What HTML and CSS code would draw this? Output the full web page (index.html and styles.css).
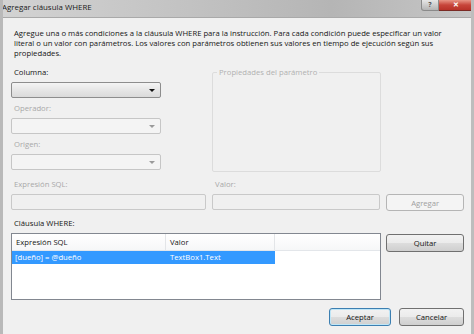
FILE: index.html
```html
<!DOCTYPE html>
<html lang="es">
<head>
  <meta charset="UTF-8" />
  <title>Agregar cláusula WHERE</title>
  <link rel="stylesheet" href="styles.css">
</head>
<body>

  <div class="window">
    <!-- Title bar -->
    <div class="titlebar">
      <span class="title">Agregar cláusula WHERE</span>
      <div class="caption-btns">
        <span class="help-btn">?</span>
        <span class="close-btn">&#x2715;</span>
      </div>
    </div>

    <div class="panel">
      <p class="intro">Agregue una o más condiciones a la cláusula WHERE para la instrucción. Para cada condición puede especificar un valor<br>literal o un valor con parámetros. Los valores con parámetros obtienen sus valores en tiempo de ejecución según sus<br>propiedades.</p>

      <div class="top">
        <div class="fields">
          <div class="lbl">Columna:</div>
          <div class="combo"><span class="arrow"></span></div>
          <div class="lbl disabled">Operador:</div>
          <div class="combo disabled"><span class="arrow"></span></div>
          <div class="lbl disabled">Origen:</div>
          <div class="combo disabled"><span class="arrow"></span></div>
        </div>
        <fieldset class="props">
          <legend>Propiedades del parámetro</legend>
        </fieldset>
      </div>

      <div class="expr-row">
        <div class="expr">
          <div class="lbl disabled">Expresión SQL:</div>
          <div class="textbox"></div>
        </div>
        <div class="valor">
          <div class="lbl disabled">Valor:</div>
          <div class="textbox"></div>
        </div>
        <button class="btn add-btn" disabled>Agregar</button>
      </div>

      <div class="lbl where-lbl">Cláusula WHERE:</div>
      <div class="where-row">
        <div class="list">
          <div class="list-head">
            <span class="col col-expr">Expresión SQL</span>
            <span class="col col-val">Valor</span>
            <span class="col col-rest"></span>
          </div>
          <div class="list-row selected">
            <span class="col col-expr">[dueño] = @dueño</span>
            <span class="col col-val">TextBox1.Text</span>
          </div>
        </div>
        <button class="btn quit-btn">Quitar</button>
      </div>

      <div class="footer">
        <button class="btn ok-btn">Aceptar</button>
        <button class="btn cancel-btn">Cancelar</button>
      </div>
    </div>
  </div>

</body>
</html>
```
FILE: styles.css
```css
body {
  margin: 0;
  font-family: 'Open Sans', 'Noto Sans', sans-serif;
  font-size: 7.7px;
  color: #151515;
  background: #f0f0f0;
}

.window {
  width: 474px;
  height: 334px;
  background: #c4c4c4;
  box-sizing: border-box;
  border-left: 3px solid #b9b9b9;
  border-right: 3px solid #bdbdbd;
  display: flex;
  flex-direction: column;
  overflow: hidden;
}

/* title bar */
.titlebar {
  height: 17px;
  margin-left: -3px;
  margin-right: -3px;
  background: linear-gradient(90deg, #d3d3d3, #c2c2c2 40%, #b5b5b5 70%, #c6c6c6);
  display: flex;
  justify-content: space-between;
  align-items: flex-start;
}

.title {
  padding-left: 2px;
  line-height: 15px;
  font-size: 7.9px;
  color: #1a1a1a;
}

.caption-btns {
  display: flex;
  height: 11px;
}

.help-btn {
  width: 16px;
  background: linear-gradient(#e6e6e6, #b4b4b4);
  border: 1px solid #8a8a8a;
  border-top: none;
  border-radius: 0 0 0 3px;
  color: #555;
  font-size: 7px;
  font-weight: bold;
  text-align: center;
  line-height: 10px;
}

.close-btn {
  width: 34px;
  background: linear-gradient(#e89585, #c7453a 50%, #b83228);
  border: 1px solid #7a2a24;
  border-top: none;
  border-left: none;
  color: #fff;
  font-size: 7px;
  font-weight: bold;
  text-align: center;
  line-height: 10px;
}

/* content */
.panel {
  flex: 1;
  background: #f0f0f0;
  border-top: 1px solid #a9a9a9;
  padding: 10px 7px 0 8px;
}

.intro {
  margin: 0;
  padding-left: 3px;
  line-height: 10px;
  white-space: nowrap;
}

.lbl {
  height: 20px;
  line-height: 20px;
  padding-left: 3px;
}

.disabled {
  color: #a8a8a8;
}

.top {
  display: flex;
  margin-top: 4px;
}

.fields {
  width: 201px;
}

.combo {
  width: 150px;
  height: 16px;
  box-sizing: border-box;
  border: 1px solid #8d8d8d;
  border-radius: 2px;
  background: linear-gradient(#f4f4f4, #e6e6e6 50%, #dadada);
  display: flex;
  justify-content: flex-end;
  align-items: center;
  padding-right: 5px;
}

.combo.disabled {
  border-color: #c6c6c6;
  background: #f4f4f4;
}

.arrow {
  width: 0;
  height: 0;
  border-left: 3px solid transparent;
  border-right: 3px solid transparent;
  border-top: 3px solid #111;
}

.combo.disabled .arrow {
  border-top-color: #9a9a9a;
}

.props {
  margin: 5px 0 0 0;
  padding: 0;
  width: 169px;
  height: 105px;
  box-sizing: border-box;
  border: 1px solid #dcdcdc;
  border-radius: 2px;
}

.props legend {
  margin-left: 4px;
  padding: 0 2px;
  line-height: 10px;
  color: #b0b0b0;
}

/* expression row */
.expr-row {
  display: flex;
  align-items: flex-end;
  margin-top: 2px;
}

.expr {
  width: 196px;
  margin-right: 6px;
}

.valor {
  width: 169px;
  margin-right: 6px;
}

.textbox {
  height: 16px;
  box-sizing: border-box;
  border: 1px solid #c9c9c9;
  border-radius: 2px;
  background: #f0f0f0;
}

.btn {
  font-family: inherit;
  font-size: 7.7px;
  color: #151515;
  box-sizing: border-box;
  border: 1px solid #707070;
  border-radius: 3px;
  background: linear-gradient(#f2f2f2, #ebebeb 50%, #dddddd 51%, #cfcfcf);
  padding: 0;
}

.add-btn {
  width: 78px;
  height: 17px;
  margin-bottom: -1px;
  color: #a0a0a0;
  border-color: #b5b5b5;
  background: #f4f4f4;
}

/* where clause */
.where-lbl {
  height: 19px;
  line-height: 19px;
  margin-top: 4px;
}

.where-row {
  display: flex;
  align-items: flex-start;
}

.list {
  width: 371px;
  height: 67px;
  box-sizing: border-box;
  border: 1px solid #828790;
  background: #fff;
}

.list-head {
  display: flex;
  height: 16px;
  border-bottom: 1px solid #e3e6ea;
  background: linear-gradient(#ffffff, #f6f7f8);
}

.list-head .col {
  line-height: 16px;
  border-right: 1px solid #e3e5e8;
}

.col {
  box-sizing: border-box;
  padding-left: 4px;
  white-space: nowrap;
}

.col-expr {
  width: 154px;
}

.col-val {
  width: 109px;
}

.col-rest {
  flex: 1;
  border-right: none !important;
}

.list-row {
  display: flex;
  height: 13px;
  line-height: 13px;
}

.list-row.selected {
  width: 263px;
  background: #3399ff;
  color: #fff;
}

.list-row .col-expr {
  padding-left: 3px;
}

.list-row .col-val {
  padding-left: 4px;
}

.quit-btn {
  width: 78px;
  height: 18px;
  margin-left: 5px;
  margin-top: 1px;
}

/* footer */
.footer {
  display: flex;
  justify-content: flex-end;
  gap: 8px;
  margin-top: 8px;
}

.ok-btn {
  width: 62px;
  height: 18px;
  border-color: #3c7fb1;
  box-shadow: inset 0 0 0 1px #bfe6f7;
}

.cancel-btn {
  width: 65px;
  height: 18px;
}
```
